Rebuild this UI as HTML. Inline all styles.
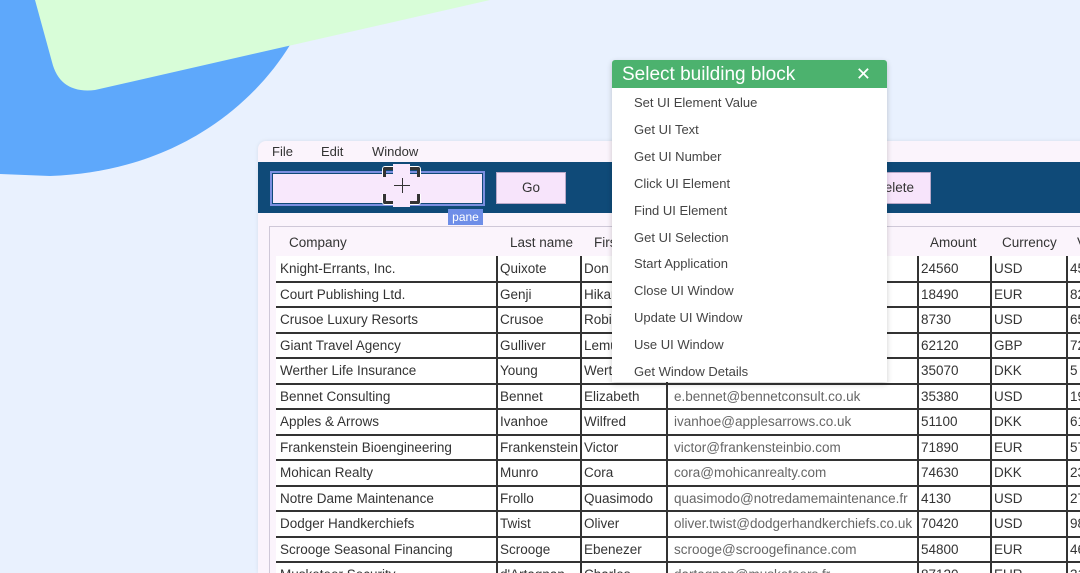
<!DOCTYPE html>
<html><head><meta charset="utf-8"><style>
*{margin:0;padding:0;box-sizing:border-box}
html,body{width:1080px;height:573px;overflow:hidden}
body{background:#e9f1fe;font-family:"Liberation Sans",sans-serif;position:relative}
.a{position:absolute}
.win{left:258px;top:141px;width:840px;height:432px;background:#fbf4fc;border-radius:8px 0 0 0;box-shadow:0 0 4px rgba(0,0,0,.08)}
.menu{font-size:13px;color:#333;top:144px}
.tb{left:258px;top:162px;width:822px;height:51px;background:#0f4a78}
.btn{background:#f7e4fb;border:1px solid #b8a8c8;font-size:13.5px;color:#333;text-align:center;line-height:30px}
.row{position:absolute;left:276px;height:26px;width:820px;font-size:13.5px;color:#333}
.row span{position:absolute;top:5px;white-space:nowrap}
.hl{position:absolute;left:276px;width:820px;height:1.5px;background:#333}
.vl{position:absolute;top:256px;height:320px;width:1.5px;background:#333}
.hd{font-size:13.5px;color:#333;top:235px}
.pop{left:612px;top:60px;width:275px;height:322px;background:#fff;box-shadow:0 2px 6px rgba(0,0,0,.2);border-radius:3px 3px 0 0}
.ph{height:28px;background:#4cb26e;color:#fff;font-size:19px;padding-left:10px;line-height:29px;border-radius:3px 3px 0 0}
.it{position:absolute;left:22px;font-size:13px;color:#444}
</style></head><body>
<svg class="a" style="left:0;top:0" width="520" height="200">
<path d="M0,0 L300,0 L290,45 C250,110 170,172 50,176 L0,174 Z" fill="#5ea8fb"/>
<path d="M35,0 L52,62 Q60,94 95,90 L490,0 Z" fill="#d8fdd8"/>
</svg>
<div class="a win"></div>
<div class="a menu" style="left:272px">File</div>
<div class="a menu" style="left:321px">Edit</div>
<div class="a menu" style="left:372px">Window</div>
<div class="a tb"></div>
<div class="a" style="left:270px;top:171px;width:215px;height:35px;border:2px solid #7b8fe0"></div>
<div class="a" style="left:273px;top:174px;width:209px;height:29px;background:#f8e8fc"></div>
<div class="a" style="left:448px;top:209px;width:35px;height:16px;background:#6e8ee8;color:#fff;font-size:12px;text-align:center;line-height:16px">pane</div>
<div class="a" style="left:383px;top:167px;width:37px;height:37px;border:3px solid #333;border-radius:2px;box-shadow:0 0 0 1px #fff"></div>
<div class="a" style="left:393px;top:164px;width:17px;height:43px;background:#f8e8fc"></div>
<div class="a" style="left:380px;top:177px;width:43px;height:17px;background:#f8e8fc"></div>
<div class="a" style="left:394px;top:185px;width:16px;height:1.3px;background:#333"></div>
<div class="a" style="left:401.5px;top:178px;width:1.3px;height:15px;background:#333"></div>
<div class="a btn" style="left:496px;top:172px;width:70px;height:32px">Go</div>
<div class="a btn" style="left:840px;top:172px;width:91px;height:32px;text-align:right;padding-right:16px">Delete</div>
<div class="a" style="left:269px;top:226px;width:820px;height:360px;border:1px solid #cfc8d8;border-right:none;background:#fbf4fc"></div>
<div class="a" style="left:276px;top:256px;width:820px;height:330px;background:#fff"></div>
<div class="a hd" style="left:289px">Company</div>
<div class="a hd" style="left:510px">Last name</div>
<div class="a hd" style="left:594px">First name</div>
<div class="a hd" style="left:930px">Amount</div>
<div class="a hd" style="left:1002px">Currency</div>
<div class="a hd" style="left:1077px">V</div>
<div id="rows"></div>
<div class="vl" style="left:496px"></div><div class="vl" style="left:580px"></div><div class="vl" style="left:666px"></div><div class="vl" style="left:917px"></div><div class="vl" style="left:990px"></div><div class="vl" style="left:1066px"></div>
<div class="a pop"><div class="ph">Select building block<span style="position:absolute;right:16px;top:0;font-size:18px">✕</span></div>
<div class="it" style="top:35px">Set UI Element Value</div>
<div class="it" style="top:62px">Get UI Text</div>
<div class="it" style="top:89px">Get UI Number</div>
<div class="it" style="top:116px">Click UI Element</div>
<div class="it" style="top:143px">Find UI Element</div>
<div class="it" style="top:170px">Get UI Selection</div>
<div class="it" style="top:196px">Start Application</div>
<div class="it" style="top:223px">Close UI Window</div>
<div class="it" style="top:250px">Update UI Window</div>
<div class="it" style="top:277px">Use UI Window</div>
<div class="it" style="top:304px">Get Window Details</div>
</div>
<script>
var d=[["Knight-Errants, Inc.","Quixote","Don","","24560","USD","45"],
["Court Publishing Ltd.","Genji","Hikaru","","18490","EUR","82"],
["Crusoe Luxury Resorts","Crusoe","Robinson","","8730","USD","65"],
["Giant Travel Agency","Gulliver","Lemuel","","62120","GBP","72"],
["Werther Life Insurance","Young","Werther","","35070","DKK","5"],
["Bennet Consulting","Bennet","Elizabeth","e.bennet@bennetconsult.co.uk","35380","USD","19"],
["Apples & Arrows","Ivanhoe","Wilfred","ivanhoe@applesarrows.co.uk","51100","DKK","61"],
["Frankenstein Bioengineering","Frankenstein","Victor","victor@frankensteinbio.com","71890","EUR","57"],
["Mohican Realty","Munro","Cora","cora@mohicanrealty.com","74630","DKK","23"],
["Notre Dame Maintenance","Frollo","Quasimodo","quasimodo@notredamemaintenance.fr","4130","USD","27"],
["Dodger Handkerchiefs","Twist","Oliver","oliver.twist@dodgerhandkerchiefs.co.uk","70420","USD","98"],
["Scrooge Seasonal Financing","Scrooge","Ebenezer","scrooge@scroogefinance.com","54800","EUR","46"],
["Musketeer Security","d'Artagnan","Charles","dartagnan@musketeers.fr","87120","EUR","31"]];
var x=[4,224,308,398,645,718,794],h="";
d.forEach(function(r,i){var t=256+i*25.5;h+='<div class="row" style="top:'+t+'px">';
r.forEach(function(c,j){h+='<span style="left:'+x[j]+'px'+(j==3?';color:#666':'')+'">'+c.replace(/&/g,'&amp;')+'</span>'});h+='</div>';
h+='<div class="hl" style="top:'+Math.round(t+24.5)+'px"></div>'});
document.getElementById('rows').innerHTML=h;
</script>
</body></html>
